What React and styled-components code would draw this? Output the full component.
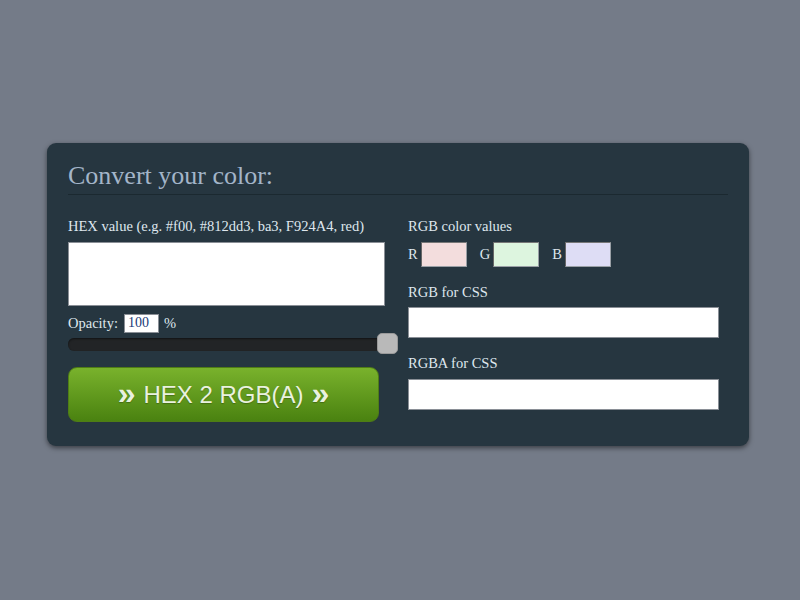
import React from "react";
import styled, { createGlobalStyle } from "styled-components";

const Global = createGlobalStyle`
  html, body { margin: 0; padding: 0; background: #747b88; }
  body { width: 800px; height: 600px; overflow: hidden; font-family: "Liberation Serif", "DejaVu Serif", serif; }
`;

const Page = styled.div`
  padding-top: 143px;
  padding-left: 47px;
`;

const Panel = styled.div`
  width: 702px;
  height: 303px;
  box-sizing: border-box;
  background: #263640;
  border-radius: 9px;
  box-shadow: 0 2px 5px rgba(0,0,0,0.5);
  padding: 17px 21px 0 21px;
`;

const Title = styled.h1`
  margin: 0;
  font-family: "Liberation Serif", serif;
  font-weight: normal;
  font-size: 26px;
  line-height: 32px;
  color: #a3b5c9;
  padding-bottom: 2px;
  border-bottom: 1px solid #1b2930;
  width: 660px;
`;

const Body = styled.div`
  display: flex;
  gap: 10px;
  margin-top: 22px;
`;

const Column = styled.div`
  width: ${(p) => p.$w}px;
  display: flex;
  flex-direction: column;
`;

const Label = styled.div`
  color: #dfe7ee;
  font-size: 14.5px;
  line-height: 18px;
  margin-top: ${(p) => p.$mt || 0}px;
`;

const TextArea = styled.textarea`
  box-sizing: border-box;
  width: 317px;
  height: 64px;
  margin: 7px 0 0 0;
  border: 1px solid #8a8f96;
  background: #fff;
  resize: none;
  display: block;
`;

const OpacityRow = styled.div`
  display: flex;
  align-items: center;
  gap: 4px;
  color: #dfe7ee;
  font-size: 14.5px;
  margin-top: 7px;
  height: 20px;
`;

const SmallInput = styled.input`
  box-sizing: border-box;
  width: 35px;
  height: 19px;
  border: 1px solid #8a8f96;
  font-family: "Liberation Serif", serif;
  font-size: 14px;
  color: #1a3a78;
  padding: 0 3px;
  margin: 0 1px 0 2px;
`;

const Slider = styled.div`
  position: relative;
  width: 330px;
  height: 22px;
  display: flex;
  align-items: center;
`;

const Track = styled.div`
  width: 318px;
  height: 13px;
  border-radius: 6px;
  background: #222426;
  box-shadow: inset 0 1px 2px rgba(0,0,0,0.5);
`;

const Thumb = styled.div`
  position: absolute;
  right: 0;
  top: 0;
  width: 21px;
  height: 21px;
  box-sizing: border-box;
  border-radius: 5px;
  background: #b9b9b9;
  border: 1px solid #9a9a9a;
`;

const Button = styled.button`
  margin-top: 12px;
  width: 311px;
  height: 55px;
  border-radius: 9px;
  border: 1px solid #4f7d15;
  background: linear-gradient(#79b22c, #4a8210);
  color: #e9f1df;
  font-family: "Liberation Sans", Arial, sans-serif;
  font-size: 24px;
  cursor: pointer;
  display: flex;
  align-items: center;
  justify-content: center;
  gap: 8px;
  text-shadow: 0 1px 1px rgba(0,0,0,0.25);
`;

const Chevron = styled.span`
  font-size: 32px;
  font-weight: bold;
  line-height: 1;
  position: relative;
  top: -2px;
`;

const RgbRow = styled.div`
  display: flex;
  align-items: center;
  margin-top: 7px;
  color: #dfe7ee;
  font-size: 14.5px;
`;

const ChanLabel = styled.span`
  margin-left: ${(p) => p.$ml || 0}px;
  margin-right: 3px;
`;

const ChanInput = styled.input`
  box-sizing: border-box;
  width: 46px;
  height: 25px;
  border: 1px solid #9aa0a6;
  border-left-color: #666;
  border-top-color: #777;
  background: ${(p) => p.$bg};
`;

const WideInput = styled.input`
  box-sizing: border-box;
  width: 311px;
  height: 31px;
  border: 1px solid #8a8f96;
  background: #fff;
  margin-top: ${(p) => p.$mt || 0}px;
  display: block;
`;

export default function App() {
  return (
    <>
      <Global />
      <Page>
        <Panel>
          <Title>Convert your color:</Title>
          <Body>
            <Column $w={330}>
              <Label>HEX value (e.g. #f00, #812dd3, ba3, F924A4, red)</Label>
              <TextArea />
              <OpacityRow>
                Opacity:<SmallInput defaultValue="100" />%
              </OpacityRow>
              <Slider>
                <Track />
                <Thumb />
              </Slider>
              <Button>
                <Chevron>»</Chevron>HEX 2 RGB(A)<Chevron>»</Chevron>
              </Button>
            </Column>
            <Column $w={311}>
              <Label>RGB color values</Label>
              <RgbRow>
                <ChanLabel>R</ChanLabel>
                <ChanInput $bg="#f3dddd" />
                <ChanLabel $ml={13}>G</ChanLabel>
                <ChanInput $bg="#ddf5df" />
                <ChanLabel $ml={13}>B</ChanLabel>
                <ChanInput $bg="#deddf5" />
              </RgbRow>
              <Label $mt={16}>RGB for CSS</Label>
              <WideInput $mt={6} />
              <Label $mt={16}>RGBA for CSS</Label>
              <WideInput $mt={7} />
            </Column>
          </Body>
        </Panel>
      </Page>
    </>
  );
}
